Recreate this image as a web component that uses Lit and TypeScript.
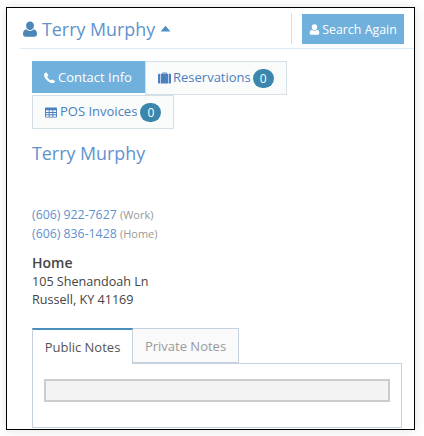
import { LitElement, html, css, svg } from "lit";
import { customElement } from "lit/decorators.js";

const userIcon = (cls: string) => html`<svg class=${cls} viewBox="0 0 14 16" aria-hidden="true"><path fill="currentColor" d="M7 0.5a3.9 3.9 0 0 1 3.9 4.2c0 2.4-1.7 4.3-3.9 4.3S3.1 7.1 3.1 4.7A3.9 3.9 0 0 1 7 .5zM3.4 8.2C4.3 9.2 5.6 9.9 7 9.9s2.7-.7 3.6-1.7c2.1.2 3.4 1.9 3.4 4.8 0 1.6-1 2.7-2.5 2.7h-9C1 15.7 0 14.6 0 13c0-2.9 1.3-4.6 3.4-4.8z"/></svg>`;
const phone = html`<svg class="ic" viewBox="0 0 12 12" aria-hidden="true"><path fill="currentColor" d="M2.9.6 4.500 3.400c.2.3.1.6-.1.8l-.9.9c.5 1 1.100 1.800 1.700 2.400.6.600 1.400 1.200 2.400 1.700l.9-.9c.2-.2.5-.3.8-.1l2.400 1.500c.3.200.3.500.2.800-.3.800-1.300 1.900-2.300 1.900C5.300 12.200-.2 6.700 0 3 0 2 1.300.9 2.100.6c.3-.1.600-.2.800 0z"/></svg>`;
const briefcase = html`<svg class="ic" viewBox="0 0 14 12" aria-hidden="true"><path fill="currentColor" fill-rule="evenodd" d="M4.500 1.500V.9c0-.5.400-.9.900-.9h3.200c.5 0 .9.400.9.900v.6H11V12H3V1.500zM5.500 1.500h3V1h-3zM2.300 1.500V12H1.200C.5 12 0 11.500 0 10.800V2.700C0 2 .5 1.500 1.200 1.500zM11.700 1.500h1.100c.7 0 1.200.5 1.200 1.200v8.100c0 .7-.5 1.200-1.200 1.200h-1.100z"/></svg>`;
const table = html`<svg class="ic tbl" viewBox="0 0 13 11" aria-hidden="true"><path fill="currentColor" fill-rule="evenodd" d="M.8 0h11.400c.4 0 .8.400.8.800v9.400c0 .4-.4.800-.8.800H.8c-.4 0-.8-.4-.8-.8V.8C0 .4.400 0 .8 0zM1 3v2h3V3zM5 3v2h3V3zM9 3v2h3V3zM1 6v1.500h3V6zM5 6v1.500h3V6zM9 6v1.500h3V6zM1 8.500V10h3V8.500zM5 8.500V10h3V8.500zM9 8.500V10h3V8.500z"/></svg>`;
const caret = svg`<path fill="currentColor" d="M.6 6.500 5.500.8 10.400 6.500z"/>`;

@customElement("app-root")
export class AppRoot extends LitElement {
  static styles = css`
    :host {
      display: block;
      width: 424px;
      height: 436px;
      overflow: hidden;
      background: #fff;
      font-family: "Open Sans", sans-serif;
      color: #333;
    }
    * { box-sizing: border-box; }
    .frame {
      width: 409px;
      height: 423px;
      margin: 7px 0 0 6px;
      border: 1px solid #000;
      background: #fff;
      box-shadow: 0 0 10px rgba(0, 0, 0, 0.12);
      overflow: hidden;
    }
    .head {
      height: 41px;
      margin: 0 0 0 13px;
      padding: 5px 10px 0 3px;
      border-bottom: 1px solid #deeaf4;
      display: flex;
      align-items: flex-start;
    }
    .title {
      display: flex;
      align-items: center;
      height: 31px;
      font-size: 17.85px;
      color: #5f92cd;
      flex: 1;
    }
    .uicon { width: 14px; height: 16px; color: #4a86b8; margin-right: 5px; }
    .caret { width: 11px; height: 7px; color: #4a90c8; margin: 0 0 1px 5px; }
    .divider { width: 1px; height: 31px; background: #ddd; margin-right: 10px; }
    .search {
      width: 102px;
      height: 30px;
      margin-top: 1px;
      background: #6fb0dd;
      color: #fff;
      font-size: 12.4px;
      display: flex;
      align-items: center;
      justify-content: center;
      gap: 2px;
    }
    .sicon { width: 11px; height: 11px; }
    .body { padding: 12px 12px 0 25px; }
    .tabs { display: flex; flex-wrap: wrap; width: 260px; align-items: flex-start; }
    .tab {
      height: 34px;
      display: flex;
      align-items: center;
      padding: 0 12px;
      background: #fafbfb;
      border: 1px solid #d5e0e6;
      color: #4a7fc0;
      font-size: 13px;
      gap: 3px;
      white-space: nowrap;
    }
    .tab.res { width: 142px; gap: 2px; }
    .tab.pos { width: 142px; }
    .t { margin-bottom: 2px; }
    .tab.active {
      width: 113px;
      height: 32px;
      background: #6fb0dd;
      border: 0;
      color: #fff;
    }
    .ic { width: 11px; height: 11px; flex: none; }
    .ic.tbl { width: 12px; }
    .tab.res .ic { width: 13px; height: 12px; }
    .badge {
      min-width: 21px;
      height: 19px;
      border-radius: 10px;
      background: #3a86ac;
      color: #fff;
      font-size: 12px;
      display: flex;
      align-items: center;
      justify-content: center;
    }
    h2 {
      margin: 11px 0 0;
      font-size: 17.85px;
      font-weight: 400;
      line-height: 26px;
      color: #5f92cd;
    }
    .phones { margin-top: 39px; font-size: 12.3px; line-height: 19px; color: #5f92cd; }
    .phones small { font-size: 11px; color: #999; }
    .addr { margin-top: 9px; font-size: 12.6px; line-height: 18px; color: #444; }
    .addr b { display: block; font-size: 14px; font-weight: 600; line-height: 21px; }
    .ntabs { display: flex; margin-top: 19px; position: relative; z-index: 1; }
    .ntab {
      height: 35px;
      padding: 0;
      display: flex;
      align-items: center;
      justify-content: center;
      font-size: 13px;
      white-space: nowrap;
      color: #999;
      background: #fafafa;
      border: 1px solid #c5d1de;
      border-left: 0;
      width: 106px;
    }
    .ntab.on {
      width: 101px;
      border: 1px solid #c5d1de;
      border-top: 2px solid #4a8cba;
      border-bottom: 0;
      background: #fff;
      color: #555;
      height: 36px;
    }
    .panel {
      width: 370px;
      height: 65px;
      margin-top: -1px;
      border: 1px solid #c5d1de;
      padding: 15px 11px 0;
    }
    .input { height: 23px; background: #f3f3f3; border: 2px solid #ccc; }
  `;

  render() {
    return html`<div class="frame">
      <div class="head">
        <div class="title">${userIcon("uicon")}<span>Terry Murphy</span><svg class="caret" viewBox="0 0 11 7" aria-hidden="true">${caret}</svg></div>
        <div class="divider"></div>
        <div class="search">${userIcon("sicon")}<span>Search Again</span></div>
      </div>
      <div class="body">
        <div class="tabs">
          <div class="tab active">${phone}<span>Contact Info</span></div>
          <div class="tab res">${briefcase}<span class="t">Reservations</span><span class="badge">0</span></div>
          <div class="tab pos">${table}<span class="t">POS Invoices</span><span class="badge">0</span></div>
        </div>
        <h2>Terry Murphy</h2>
        <div class="phones">
          <div>(606) 922-7627 <small>(Work)</small></div>
          <div>(606) 836-1428 <small>(Home)</small></div>
        </div>
        <div class="addr"><b>Home</b>105 Shenandoah Ln<br />Russell, KY 41169</div>
        <div class="ntabs">
          <div class="ntab on">Public Notes</div>
          <div class="ntab">Private Notes</div>
        </div>
        <div class="panel"><div class="input"></div></div>
      </div>
    </div>`;
  }
}
